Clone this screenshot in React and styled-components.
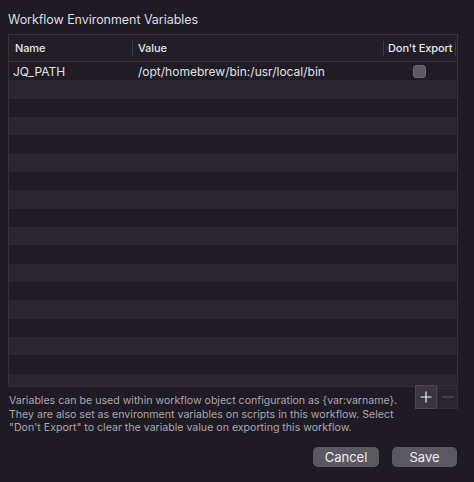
import React from 'react';
import styled, { createGlobalStyle } from 'styled-components';

const Global = createGlobalStyle`
  html, body { margin: 0; padding: 0; background: #1f1b24; }
  body {
    width: 474px; height: 482px; overflow: hidden;
    font-family: Inter, "Noto Sans", "Liberation Sans", sans-serif;
    -webkit-font-smoothing: antialiased;
  }
`;

const Window = styled.div`
  width: 474px;
  height: 482px;
  box-sizing: border-box;
  background: #1f1b24;
  display: flex;
  flex-direction: column;
  padding: 0 16px 0 8px;
`;

const Title = styled.h1`
  margin: 0;
  height: 34px;
  box-sizing: border-box;
  padding: 12px 0 0 0;
  font-size: 12.5px;
  letter-spacing: -0.05px;
  line-height: 16px;
  font-weight: 400;
  color: #dddbe0;
`;

const Table = styled.div`
  height: 353px;
  box-sizing: border-box;
  border: 1px solid #35313a;
  background: #201c25;
  display: flex;
  flex-direction: column;
  overflow: hidden;
`;

const cols = '123px 251px 1fr';

const HeaderRow = styled.div`
  display: grid;
  grid-template-columns: ${cols};
  height: 27px;
  flex: none;
  box-sizing: border-box;
  border-bottom: 1px solid #37333c;
  background: #221e27;
`;

const HeaderCell = styled.div`
  display: flex;
  align-items: center;
  justify-content: space-between;
`;

const HeaderLabel = styled.span`
  font-size: 11px;
  font-weight: 500;
  letter-spacing: -0.1px;
  color: #e6e4e9;
  line-height: 15px;
  padding-left: ${p => p.$pad}px;
  border-left: 1px solid ${p => (p.$sep ? '#3d3943' : 'transparent')};
`;

const EndSep = styled.span`
  width: 1px;
  height: 15px;
  background: #3d3943;
  margin-right: 1px;
`;

const Row = styled.div`
  display: grid;
  grid-template-columns: ${cols};
  height: 18.33px;
  flex: none;
  align-items: center;
  background: ${p => (p.$alt ? '#2a2630' : '#201c25')};
`;

const Cell = styled.div`
  font-size: 12px;
  color: #e2e0e5;
  padding-left: ${p => p.$pad}px;
  white-space: nowrap;
  display: flex;
  justify-content: ${p => (p.$center ? 'center' : 'flex-start')};
`;

const Check = styled.span`
  width: 13px;
  height: 13px;
  box-sizing: border-box;
  border-radius: 3px;
  background: #5c5962;
  border: 1px solid #6a6770;
  margin-right: 1px;
`;

const Footer = styled.div`
  height: 50px;
  display: flex;
  align-items: flex-start;
  justify-content: space-between;
`;

const Info = styled.p`
  margin: 0;
  padding: 7px 0 0 1px;
  font-size: 10.6px;
  line-height: 13.5px;
  color: #aaa7ae;
  white-space: nowrap;
`;

const PlusMinus = styled.div`
  display: flex;
  margin-top: -2px;
`;

const SmallBtn = styled.button`
  width: ${p => p.$w}px;
  height: 24px;
  padding: 0;
  margin: 0;
  box-sizing: border-box;
  display: flex;
  align-items: center;
  justify-content: center;
  background: ${p => (p.$disabled ? '#29252e' : '#3a3640')};
  border: 1px solid ${p => (p.$disabled ? '#322e37' : '#4a4650')};
  color: ${p => (p.$disabled ? '#55515b' : '#f2f2f4')};
`;

const ButtonBar = styled.div`
  display: flex;
  justify-content: flex-end;
  gap: 13px;
  padding: 10px 1px 0 0;
`;

const Button = styled.button`
  width: ${p => p.$w}px;
  height: 20px;
  border: none;
  border-radius: 5px;
  background: #5b5861;
  color: #eeedf0;
  font-family: inherit;
  font-size: 13px;
  line-height: 20px;
  padding: 0;
`;

const rows = Array.from({ length: 18 });

export default function App() {
  return (
    <>
      <Global />
      <Window>
        <Title>Workflow Environment Variables</Title>
        <Table>
          <HeaderRow>
            <HeaderCell><HeaderLabel $pad={5}>Name</HeaderLabel></HeaderCell>
            <HeaderCell><HeaderLabel $sep $pad={5}>Value</HeaderLabel></HeaderCell>
            <HeaderCell>
              <HeaderLabel $sep $pad={4}>Don't Export</HeaderLabel>
              <EndSep />
            </HeaderCell>
          </HeaderRow>
          {rows.map((_, i) => (
            <Row key={i} $alt={i % 2 === 1}>
              {i === 0 ? (
                <>
                  <Cell $pad={4}>JQ_PATH</Cell>
                  <Cell $pad={6}>/opt/homebrew/bin:/usr/local/bin</Cell>
                  <Cell $center><Check /></Cell>
                </>
              ) : null}
            </Row>
          ))}
        </Table>
        <Footer>
          <Info>
            Variables can be used within workflow object configuration as {'{var:varname}'}.<br />
            They are also set as environment variables on scripts in this workflow. Select<br />
            "Don't Export" to clear the variable value on exporting this workflow.
          </Info>
          <PlusMinus>
            <SmallBtn $w={22} aria-label="Add">
              <svg width="12" height="12" viewBox="0 0 12 12">
                <path d="M6 0.5V11.5M0.5 6H11.5" stroke="currentColor" strokeWidth="1.2" />
              </svg>
            </SmallBtn>
            <SmallBtn $w={21} $disabled aria-label="Remove">
              <svg width="12" height="12" viewBox="0 0 12 12">
                <path d="M0.5 6H11.5" stroke="currentColor" strokeWidth="1.2" />
              </svg>
            </SmallBtn>
          </PlusMinus>
        </Footer>
        <ButtonBar>
          <Button $w={66}>Cancel</Button>
          <Button $w={65}>Save</Button>
        </ButtonBar>
      </Window>
    </>
  );
}
